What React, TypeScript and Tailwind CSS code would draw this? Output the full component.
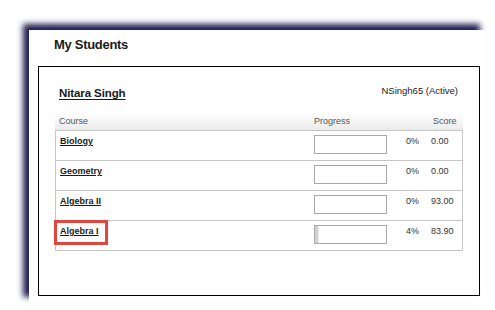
const courses = [
  { name: "Biology", progress: 0, score: "0.00" },
  { name: "Geometry", progress: 0, score: "0.00" },
  { name: "Algebra II", progress: 0, score: "93.00" },
  { name: "Algebra I", progress: 4, score: "83.90", highlighted: true },
];

export default function App() {
  return (
    <div className="w-[495px] h-[310px] bg-white overflow-hidden font-['Liberation_Sans',Arial,sans-serif]">
      <div className="ml-[29px] mt-[30px] w-[457px] h-[273px] bg-white shadow-[-6px_-6px_6px_#221d50] flex flex-col">
        <div className="pl-[25px] pt-[7px] h-[36px] text-[13px] leading-[15px] font-bold tracking-[-0.3px] text-[#1a1a1a]">
          My Students
        </div>

        <div className="ml-[9px] w-[442px] h-[230px] border border-black">
          {/* student header */}
          <div className="flex items-start justify-between pt-[19px] pl-[20px] pr-[21px]">
            <a className="text-[11.5px] leading-[14px] font-bold text-[#1a1a1a] underline underline-offset-[2px] tracking-[-0.1px]">
              Nitara Singh
            </a>
            <span className="text-[9.5px] leading-[12px] text-[#222] -mt-[1px]">NSingh65 (Active)</span>
          </div>

          {/* course table */}
          <div className="ml-[16px] mt-[13px] w-[408px] text-[9px] leading-[11px]">
            <div className="grid grid-cols-[258px_73px_44px_1fr] h-[18px] pt-[3px] border-b border-[#c6c6c6] bg-gradient-to-b from-white to-[#ebebeb] text-[#555]">
              <div className="pl-[4px]">Course</div>
              <div className="pl-[1px]">Progress</div>
              <div />
              <div className="pl-[3px]">Score</div>
            </div>
            <div className="border-x border-[#c6c6c6]">
              {courses.map((c) => (
                <div
                  key={c.name}
                  className="grid grid-cols-[258px_73px_44px_1fr] h-[30px] border-b border-[#c6c6c6] text-[#333]"
                >
                  <div className="relative pl-[4px] pt-[5px]">
                    <a className="font-bold text-[#1a1a1a] underline underline-offset-[1px]">{c.name}</a>
                    {c.highlighted && (
                      <div className="absolute left-[-2px] top-[-1px] w-[54px] h-[25px] border-[3px] border-[#e0463b]" />
                    )}
                  </div>
                  <div className="pt-[4px]">
                    <div className="h-[19px] border border-[#a8a8a8] bg-white flex">
                      {c.progress > 0 && (
                        <div className="w-[4px] h-full bg-[#d2d2d2] border-r border-[#e6e6e6]" />
                      )}
                    </div>
                  </div>
                  <div className="pl-[19px] pt-[5px]">{c.progress}%</div>
                  <div className="pt-[5px]">{c.score}</div>
                </div>
              ))}
            </div>
          </div>
        </div>
      </div>
    </div>
  );
}
